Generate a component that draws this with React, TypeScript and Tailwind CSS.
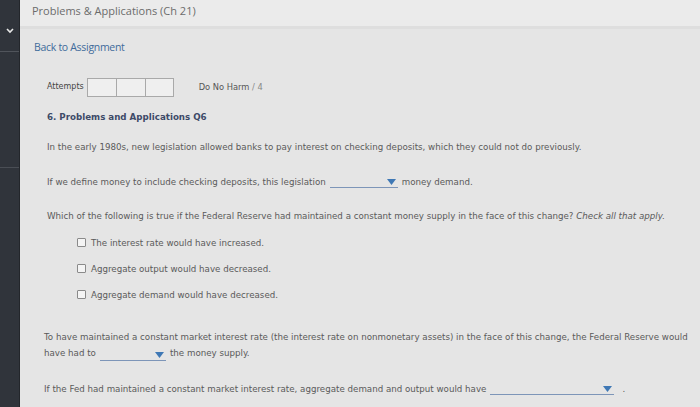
import React from "react";

const Dropdown = ({ w }: { w: string }) => (
  <span className={`inline-flex items-end justify-end ${w} h-[12px] border-b border-[#7d95b8] align-baseline mx-[4px] pr-[2px]`}>
    <svg width="9" height="6" viewBox="0 0 9 6" className="mb-[2px]">
      <path d="M0 0 L9 0 L4.5 6 Z" fill="#3f78b5" />
    </svg>
  </span>
);

const Check = ({ label }: { label: string }) => (
  <div className="flex items-center gap-[5px]">
    <span className="w-[9px] h-[9px] border border-[#8a8a8a] bg-[#f4f4f4] rounded-[1px]" />
    <span>{label}</span>
  </div>
);

export default function App() {
  return (
    <div
      className="flex w-[700px] h-[407px] overflow-hidden bg-[#e5e5e5] text-[#5a5a5a]"
      style={{ fontFamily: "'DejaVu Sans', Verdana, sans-serif" }}
    >
      <aside className="w-[20px] shrink-0 bg-[#30343b] flex flex-col border-r border-[#23262b]">
        <div className="h-[52px] flex items-center justify-center border-b border-[#50545b] pt-[10px]">
          <svg width="8" height="6" viewBox="0 0 8 6">
            <path d="M1 1 L4 4 L7 1" stroke="#e8e8e8" strokeWidth="1.6" fill="none" />
          </svg>
        </div>
        <div className="h-[116px] border-b border-[#4a4e55]" />
        <div className="flex-1" />
      </aside>
      <main className="flex-1 flex flex-col">
        <header
          className="h-[29px] bg-[#ebebeb] border-b-[3px] border-[#dedede] px-[12px] pt-[3px] text-[11px] text-[#6b6b6b]"
          style={{ fontFamily: "'Open Sans', sans-serif" }}
        >
          Problems &amp; Applications (Ch 21)
        </header>
        <div
          className="px-[14px] pt-[11px] text-[10.5px] text-[#3f6b9b] tracking-[-0.3px]"
          style={{ fontFamily: "'Open Sans', sans-serif" }}
        >
          Back to Assignment
        </div>
        <div className="pl-[27px] pr-[4px] text-[8.7px] leading-[12px]">
          <div className="flex items-center mt-[22px] text-[8px] text-[#444]">
            <span className="mr-[3px]">Attempts</span>
            <div className="flex border border-[#a9a9a9] bg-[#efefef] h-[19px]">
              <span className="w-[29px] border-r border-[#a9a9a9]" />
              <span className="w-[29px] border-r border-[#a9a9a9]" />
              <span className="w-[27px]" />
            </div>
            <span className="ml-[25px] text-[8.3px] text-[#555]">
              Do No Harm <span className="text-[#888]">/ 4</span>
            </span>
          </div>
          <div className="mt-[14px] font-bold text-[#3d4a68]">6. Problems and Applications Q6</div>
          <p className="mt-[18px]">
            In the early 1980s, new legislation allowed banks to pay interest on checking deposits, which they could not do previously.
          </p>
          <p className="mt-[23px] flex items-end">
            <span>If we define money to include checking deposits, this legislation</span>
            <Dropdown w="w-[68px]" />
            <span>money demand.</span>
          </p>
          <p className="mt-[22px]">
            Which of the following is true if the Federal Reserve had maintained a constant money supply in the face of this change?{" "}
            <i>Check all that apply.</i>
          </p>
          <div className="ml-[30px] mt-[15px] flex flex-col gap-[14px]">
            <Check label="The interest rate would have increased." />
            <Check label="Aggregate output would have decreased." />
            <Check label="Aggregate demand would have decreased." />
          </div>
          <div className="-ml-[3px]">
            <p className="mt-[28px] leading-[16px]">
              To have maintained a constant market interest rate (the interest rate on nonmonetary assets) in the face of this change, the Federal Reserve would
              <br />
              <span className="inline-flex items-end">
                <span>have had to</span>
                <Dropdown w="w-[66px]" />
                <span>the money supply.</span>
              </span>
            </p>
            <p className="mt-[22px] flex items-end">
              <span>If the Fed had maintained a constant market interest rate, aggregate demand and output would have</span>
              <Dropdown w="w-[124px]" />
              <span className="ml-[4px]">.</span>
            </p>
          </div>
        </div>
      </main>
    </div>
  );
}
